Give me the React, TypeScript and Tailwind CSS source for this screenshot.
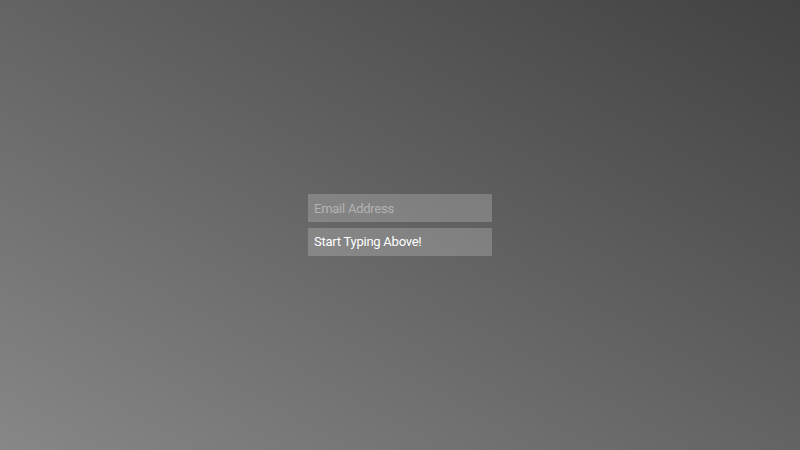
import React from "react";

export default function App() {
  return (
    <div className="w-[800px] h-[450px] bg-linear-to-tr from-[#878787] to-[#424242] flex items-center justify-center font-['Roboto',sans-serif]">
      <div className="flex flex-col gap-[6px] w-[184px]">
        <input
          type="email"
          placeholder="Email Address"
          className="h-[28px] px-[6px] bg-white/20 text-white text-[13px] tracking-[-0.25px] placeholder:text-white/40 outline-none border-0"
        />
        <button className="h-[28px] px-[6px] bg-white/20 text-white text-[13px] tracking-[-0.25px] text-left">
          Start Typing Above!
        </button>
      </div>
    </div>
  );
}
